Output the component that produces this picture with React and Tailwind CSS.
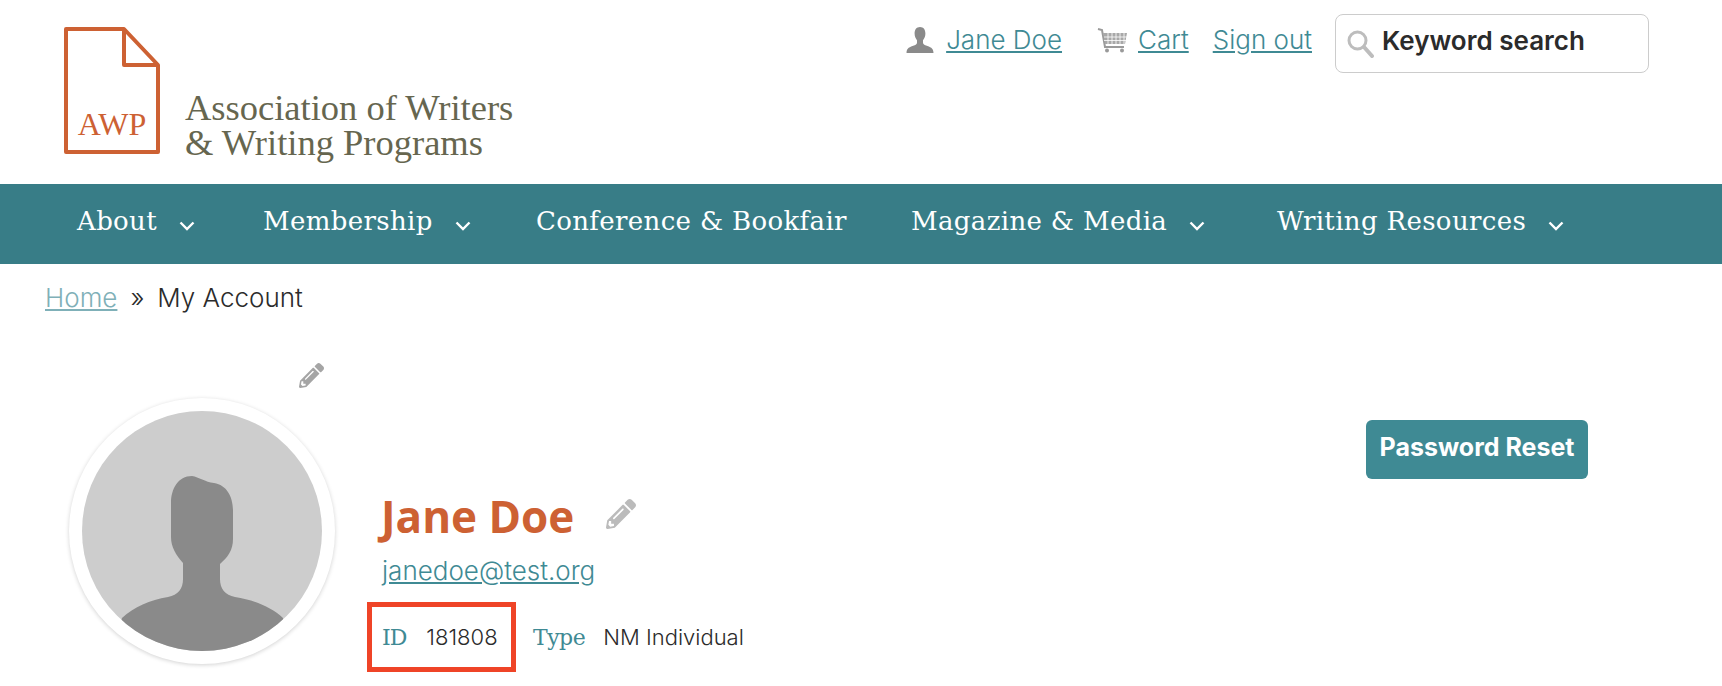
import React from "react";
import { FaPencilAlt } from "react-icons/fa";

const slab = "font-['DejaVu_Serif',serif]";
const round = "font-['Inter',sans-serif]";

function DocLogo() {
  return (
    <svg width="96" height="127" viewBox="0 0 96 127" fill="none" className="shrink-0">
      <path d="M2 2H60L94 38V125H2Z" stroke="#cd6133" strokeWidth="4" strokeLinejoin="round" />
      <path d="M60 2V38H94" stroke="#cd6133" strokeWidth="4" strokeLinejoin="round" />
      <text x="48" y="108" textAnchor="middle" fill="#cd6133" fontFamily="Liberation Serif, serif" fontSize="32">
        AWP
      </text>
    </svg>
  );
}

function UserIcon() {
  return (
    <svg width="28" height="26" viewBox="0 0 28 26" fill="#8a8a8a" className="shrink-0">
      <path d="M14 0c-3.600 0-5.400 2.800-5.400 6.500 0 2.800 1 5 2.400 6.700v2.600c0 1.300-1 2-3 2.700C4 20 .5 20.800 .5 26h27c0-5.200-3.500-6-7.500-7.500-2-.7-3-1.400-3-2.700v-2.600c1.400-1.700 2.400-3.900 2.400-6.700C19.400 2.800 17.600 0 14 0Z" />
    </svg>
  );
}

function CartIcon() {
  return (
    <svg width="31" height="26" viewBox="0 0 31 26" fill="none" className="shrink-0">
      <path d="M1 2 5 3 8 20H27" stroke="#9a9a9a" strokeWidth="2" />
      <path d="M6 6H30L28 17H8Z" fill="#a8a8a8" />
      <path d="M11 6V17M15 6V17M19 6V17M23 6V17M27 6V17M7 10H30M7 13.500H29" stroke="#fff" strokeWidth="0.8" />
      <circle cx="10" cy="23.500" r="2" fill="#9a9a9a" />
      <circle cx="25" cy="23.500" r="2" fill="#9a9a9a" />
    </svg>
  );
}

function SearchIcon() {
  return (
    <svg width="27" height="28" viewBox="0 0 27 28" fill="none" className="shrink-0">
      <circle cx="10.500" cy="10.500" r="8.500" stroke="#bdbdbd" strokeWidth="3" />
      <path d="M17 17 25 26" stroke="#bdbdbd" strokeWidth="4" strokeLinecap="round" />
    </svg>
  );
}

function Chevron() {
  return (
    <svg width="16" height="10" viewBox="0 0 16 10" fill="none" className="shrink-0">
      <path d="M1.500 1.500 8 8l6.500-6.500" stroke="#fff" strokeWidth="2.400" />
    </svg>
  );
}

function Avatar() {
  return (
    <div className="h-[266px] w-[266px] shrink-0 rounded-full bg-white p-[13px] shadow-[0_1px_4px_rgba(0,0,0,0.18)]">
      <svg viewBox="0 0 240 240" className="h-[240px] w-[240px] rounded-full">
        <rect width="240" height="240" fill="#cdcdcd" />
        <path
          fill="#8a8a8a"
          d="M110 65C117 66 123 71 132 72C145 74 151 86 151 100V128C151 139 146 146 138 153V168C138 178 143 184 153 186C172 189 189 196 201 207L210 240H30L40 207C52 196 68 189 86 186C96 184 101 178 101 168V152C94 144 89 136 89 126V92C89 78 96 65 110 65Z"
        />
      </svg>
    </div>
  );
}

const NAV = [
  { label: "About", chevron: true, w: "w-[186px]" },
  { label: "Membership", chevron: true, w: "w-[273px]" },
  { label: "Conference & Bookfair", chevron: false, w: "w-[375px]" },
  { label: "Magazine & Media", chevron: true, w: "w-[366px]" },
  { label: "Writing Resources", chevron: true, w: "" },
];

export default function App() {
  return (
    <div className={`h-[686px] w-full overflow-hidden bg-white ${round} text-[#2b2b2b]`}>
      {/* top header */}
      <header className="flex h-[184px] justify-between">
        <div className="flex items-start pl-[64px] pt-[27px]">
          <DocLogo />
          <div className="ml-[25px] mt-[63px] font-['Liberation_Serif',serif] text-[36.500px] leading-[35px] text-[#66664f]">
            <div>Association of Writers</div>
            <div>&amp; Writing Programs</div>
          </div>
        </div>

        <div className="flex items-start pr-[73px] pt-[14px] text-[26px] font-light text-[#3f8a94]">
          <div className="mt-[6px] flex items-center">
            <UserIcon />
            <a href="#" className="ml-[12px] underline">Jane Doe</a>
            <span className="ml-[35px]"><CartIcon /></span>
            <a href="#" className="ml-[10px] underline">Cart</a>
            <a href="#" className="ml-[24px] underline">Sign out</a>
          </div>
          <div className="ml-[23px] flex h-[59px] w-[314px] items-center rounded-lg border border-[#cccccc] pl-[11px]">
            <SearchIcon />
            <span className="ml-[8px] pb-[6px] text-[26px] font-semibold text-[#2b2b2b]">Keyword search</span>
          </div>
        </div>
      </header>

      {/* main nav */}
      <nav className={`flex h-[80px] items-center bg-[#387d87] pb-[6px] pl-[77px] ${slab} text-[26px] tracking-[0.35px] text-white`}>
        {NAV.map((n) => (
          <div key={n.label} className={`flex items-center ${n.w}`}>
            <span>{n.label}</span>
            {n.chevron && <span className="ml-[22px] mt-[10px]"><Chevron /></span>}
          </div>
        ))}
      </nav>

      {/* breadcrumb */}
      <div className="flex h-[68px] items-center pb-[2px] pl-[45px] text-[26px] font-light">
        <a href="#" className="text-[#7fb0b8] underline">Home</a>
        <span className="ml-[13px] text-[#2b2b2b]">»</span>
        <span className="ml-[13px]">My Account</span>
      </div>

      {/* profile */}
      <section className="flex h-[374px] justify-between bg-white pr-[134px]">
        <div className="flex">
          <div className="pl-[69px]">
            <div className="flex justify-end pr-[11px] pt-[31px] text-[#a5a5a5]">
              <FaPencilAlt size={25} />
            </div>
            <div className="mt-[10px]"><Avatar /></div>
          </div>

          <div className="ml-[32px] pt-[154px]">
            <div className="ml-[14px] flex items-center">
              <h1 className="font-['Open_Sans',sans-serif] text-[44px] font-bold leading-[60px] text-[#cd6133]">Jane Doe</h1>
              <span className="-mt-[4px] ml-[32px] text-[#bbbbbb]"><FaPencilAlt size={30} /></span>
            </div>
            <a href="#" className="ml-[15px] mt-[7px] block text-[26px] font-light leading-[36px] text-[#3f8a94] underline">janedoe@test.org</a>
            <div className="mt-[13px] flex items-center text-[22px] font-light">
              <div className="flex h-[70px] w-[149px] items-center border-[5px] border-[#ef4427] pl-[10px]">
                <span className={`${slab} text-[22px] tracking-[-1px] text-[#3f8a94]`}>ID</span>
                <span className="ml-[20px]">181808</span>
              </div>
              <span className={`ml-[17px] ${slab} text-[22px] tracking-[-0.5px] text-[#3f8a94]`}>Type</span>
              <span className="ml-[18px]">NM Individual</span>
            </div>
          </div>
        </div>

        <button type="button" className="mt-[88px] h-[59px] w-[222px] rounded-md bg-[#3f8a94] pb-[4px] text-[25px] font-bold text-white">
          Password Reset
        </button>
      </section>
    </div>
  );
}
